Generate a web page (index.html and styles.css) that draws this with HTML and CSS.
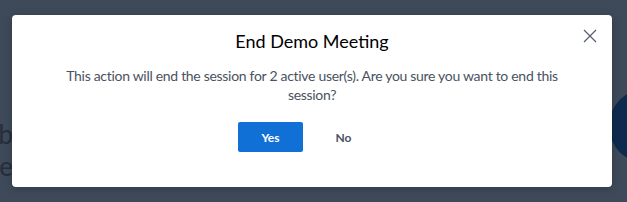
FILE: index.html
```html
<!DOCTYPE html>
<html lang="en">
<head>
<meta charset="utf-8">
<title>End Demo Meeting</title>
<link rel="stylesheet" href="styles.css">
</head>
<body>
<div class="page">
  <div class="bg-text">ub<br>e</div>
  <div class="bg-circle"></div>
  <div class="modal" role="dialog">
    <button class="close" aria-label="Close">
      <svg width="14" height="14" viewBox="0 0 14 14"><path d="M1 1L13 13M13 1L1 13" stroke="#5a6270" stroke-width="1.3" fill="none"/></svg>
    </button>
    <h2 class="title">End Demo Meeting</h2>
    <p class="message">This action will end the session for 2 active user(s). Are you sure you want to end this session?</p>
    <div class="actions">
      <button class="btn btn-yes">Yes</button>
      <button class="btn btn-no">No</button>
    </div>
  </div>
</div>
</body>
</html>
```
FILE: styles.css
```css
html, body {
  margin: 0;
  padding: 0;
}
body {
  width: 627px;
  height: 202px;
  overflow: hidden;
  font-family: "Lato", "Liberation Sans", sans-serif;
}
.page {
  position: relative;
  width: 627px;
  height: 202px;
  background: #3e4a5a;
  padding: 15px 15px 0 12px;
  box-sizing: border-box;
}
.bg-text {
  position: absolute;
  right: 614px;
  top: 118px;
  width: 40px;
  text-align: right;
  font-size: 26px;
  line-height: 32px;
  color: #252e3a;
}
.bg-circle {
  position: absolute;
  left: 609px;
  top: 89px;
  width: 74px;
  height: 74px;
  border-radius: 50%;
  background: #0e2a4e;
}
.modal {
  position: relative;
  width: 600px;
  height: 172px;
  background: #fff;
  border-radius: 4px;
  box-shadow: 0 2px 10px rgba(0, 0, 0, 0.2);
  box-sizing: border-box;
  padding-top: 14px;
  text-align: center;
}
.close {
  position: absolute;
  top: 14px;
  right: 15px;
  width: 14px;
  height: 14px;
  padding: 0;
  border: 0;
  background: none;
  display: flex;
}
.title {
  margin: 0;
  font-size: 18px;
  line-height: 24px;
  font-weight: 400;
  color: #000;
}
.message {
  margin: 13px auto 0;
  width: 520px;
  font-size: 14px;
  line-height: 19px;
  color: #4a5260;
  letter-spacing: -0.3px;
}
.actions {
  margin-top: 18px;
  display: flex;
  justify-content: center;
  gap: 8px;
  padding-right: 10px;
}
.btn {
  width: 65px;
  height: 30px;
  border: 0;
  border-radius: 2px;
  font-family: inherit;
  font-size: 12px;
  font-weight: 700;
  cursor: pointer;
}
.btn-yes {
  background: #1170d6;
  color: #fff;
}
.btn-no {
  background: #fff;
  color: #4a5260;
}
```
